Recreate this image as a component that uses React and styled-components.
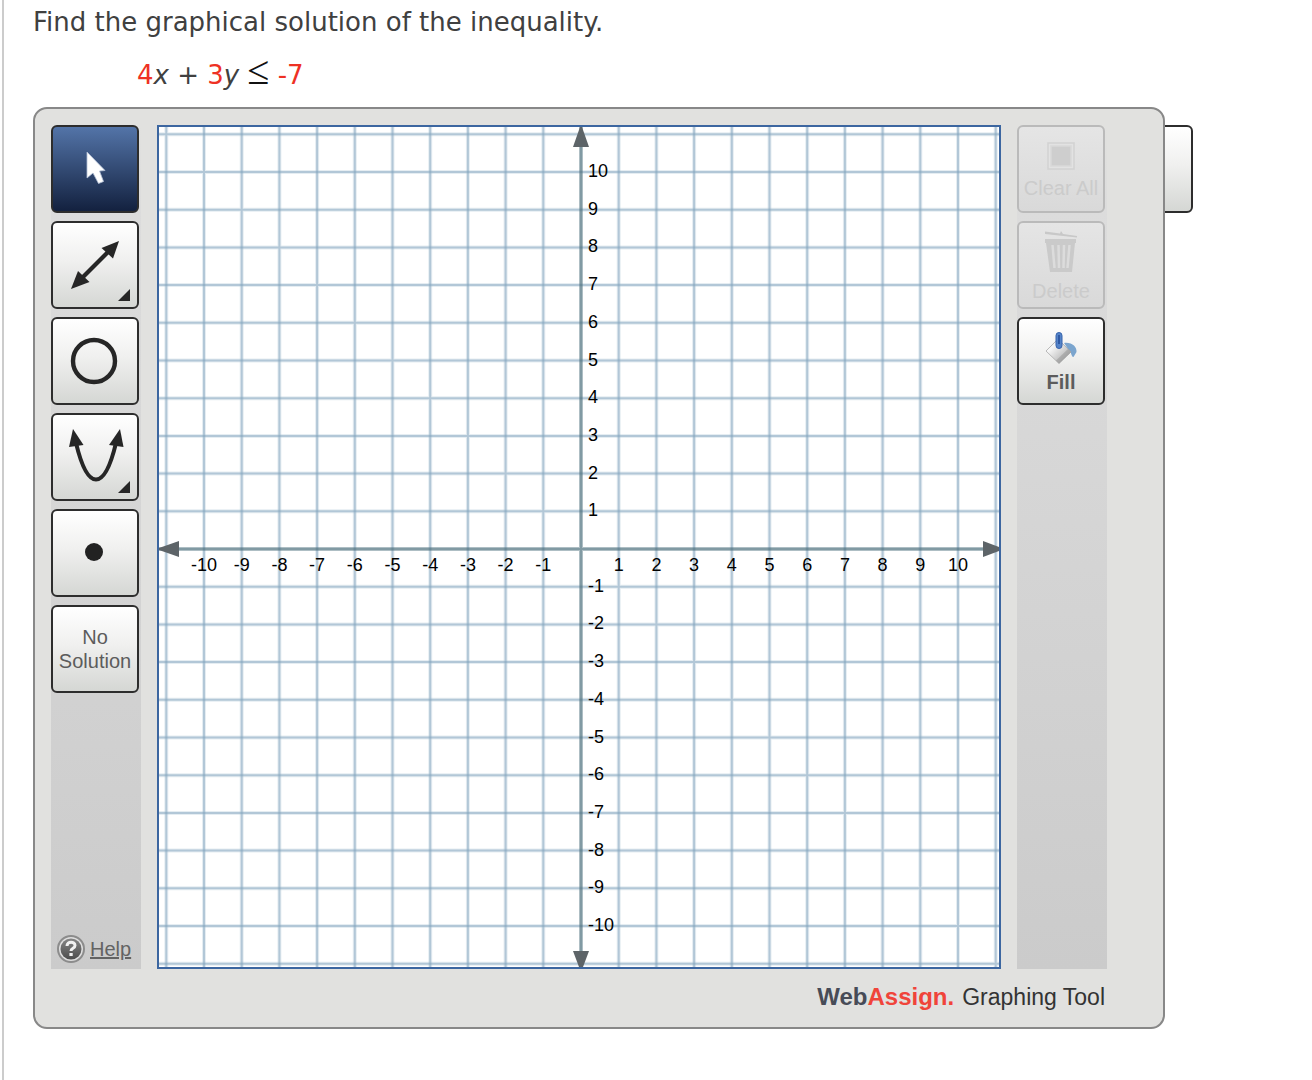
import React, { useState } from 'react'
import styled, { createGlobalStyle, css } from 'styled-components'

const STEP = 37.7
const SIZE = 840
const CENTER = 422

const lines = Array.from({ length: 23 }, (_, i) => i - 11).filter(n => n !== 0)
const labels = lines.filter(n => Math.abs(n) <= 10)

const PointerIcon = () => (
    <svg width="84" height="84" viewBox="0 0 84 84" aria-hidden="true">
        <path d="M34 25 L34 51 L40 46 L45.500 56.500 L50.500 54.500 L46.500 44 L52 43.500 Z" fill="#fff" stroke="#b4c0d6" strokeWidth="0.8" />
    </svg>
)

const LineIcon = () => (
    <svg width="84" height="84" viewBox="0 0 84 84" aria-hidden="true">
        <path d="M28 56 L57 27" stroke="#262626" strokeWidth="4.200" />
        <path d="M66 18 L60 35.500 L48.500 25 Z" fill="#262626" />
        <path d="M18 66 L25 48 L36.500 59 Z" fill="#262626" />
        <path d="M65 78 L77 66 L77 78 Z" fill="#262626" />
    </svg>
)

const CircleIcon = () => (
    <svg width="84" height="84" viewBox="0 0 84 84" aria-hidden="true">
        <circle cx="41" cy="42" r="21" fill="none" stroke="#262626" strokeWidth="4.400" />
    </svg>
)

const ParabolaIcon = () => (
    <svg width="84" height="84" viewBox="0 0 84 84" aria-hidden="true">
        <path d="M23 28 C29 53 36 64.500 43 64.500 C50 64.500 57 53 63 28" fill="none" stroke="#262626" strokeWidth="4" />
        <path d="M20 14 L30.500 30 L16 32 Z" fill="#262626" />
        <path d="M67 14 L70.500 32 L56 30 Z" fill="#262626" />
        <path d="M65 78 L77 66 L77 78 Z" fill="#262626" />
    </svg>
)

const PointIcon = () => (
    <svg width="84" height="84" viewBox="0 0 84 84" aria-hidden="true">
        <circle cx="41" cy="41" r="9" fill="#222" />
    </svg>
)

const ClearIcon = () => (
    <svg width="28" height="28" viewBox="0 0 28 28" aria-hidden="true">
        <rect x="1" y="1" width="26" height="26" fill="#e2e2e2" stroke="#d2d2d2" strokeWidth="1.500" />
        <rect x="4" y="4" width="20" height="20" fill="#cecece" stroke="#d9d9d9" strokeWidth="1.500" />
    </svg>
)

const TrashIcon = () => (
    <svg width="34" height="42" viewBox="0 0 34 42" aria-hidden="true">
        <path d="M1 0.500 L16 2.500 L17 0 L19 3 L33 5 L33 6.500 L1 3 Z" fill="#c8c8c8" />
        <path d="M1 8 H32 V12 H31 L28 41 H6 L2 12 H1 Z" fill="#cacaca" />
        <path d="M8.500 14 L10.500 37 M14.500 14 L15 37 M20 14 L19.500 37 M25.500 14 L23.500 37" stroke="#dcdcdc" strokeWidth="2.500" />
    </svg>
)

const FillIcon = () => (
    <svg width="32" height="32" viewBox="0 0 32 32" aria-hidden="true">
        <defs>
            <linearGradient id="bucket" x1="0" y1="0" x2="1" y2="1">
                <stop offset="0.3" stopColor="#f6f6f6" />
                <stop offset="1" stopColor="#999" />
            </linearGradient>
        </defs>
        <path d="M19 11 C27 10 32 15 31.500 20 L28.500 25 C26 25 27 20 23 17 Z" fill="#7ba5ce" />
        <path d="M1 19 L13 7 L26 20 L14 31.500 Z" fill="url(#bucket)" stroke="#aaa" strokeWidth="0.8" />
        <path d="M14 31.500 L26 20 L23 17 L11 28.500 Z" fill="#888" opacity="0.4" />
        <rect x="11" y="0.500" width="6" height="16" rx="3" fill="#5483c8" stroke="#3763ab" strokeWidth="1" />
        <path d="M14 3 V12" stroke="#2f59a3" strokeWidth="2" />
    </svg>
)

const HelpIcon = () => (
    <svg width="30" height="30" viewBox="0 0 30 30" aria-hidden="true">
        <defs>
            <linearGradient id="help" x1="0" y1="0" x2="0" y2="1">
                <stop offset="0" stopColor="#858585" />
                <stop offset="1" stopColor="#4c4c4c" />
            </linearGradient>
        </defs>
        <circle cx="15" cy="15" r="13" fill="#dedede" stroke="#8c8c8c" strokeWidth="2" />
        <circle cx="15" cy="15" r="10.500" fill="url(#help)" />
        <path d="M11 12 C11 7 19 7 19 11.500 C19 14.500 15 14 15 17" fill="none" stroke="#f0f0f0" strokeWidth="3" />
        <rect x="13.400" y="19" width="3.300" height="3" fill="#f0f0f0" />
    </svg>
)

const drawTools = [
    { id: 'pointer', label: 'Pointer', icon: <PointerIcon /> },
    { id: 'line', label: 'Line', icon: <LineIcon /> },
    { id: 'circle', label: 'Circle', icon: <CircleIcon /> },
    { id: 'parabola', label: 'Parabola', icon: <ParabolaIcon /> },
    { id: 'point', label: 'Point', icon: <PointIcon /> },
]

function Graph() {
    return (
        <GraphFrame>
            <Plot viewBox={`0 0 ${SIZE} ${SIZE}`} role="img" aria-label="Coordinate plane">
                {lines.map(n => {
                    const pos = CENTER + n * STEP
                    return (
                        <g key={n}>
                            <GridHalo d={`M${pos} 0 V${SIZE} M0 ${pos} H${SIZE}`} />
                            <GridLine d={`M${pos} 0 V${SIZE} M0 ${pos} H${SIZE}`} />
                        </g>
                    )
                })}
                <Axis $width={4} d={`M${CENTER} 0 V${SIZE} M0 ${CENTER} H${SIZE}`} />
                <Axis $width={2} d={`M${CENTER} 0 V${SIZE} M0 ${CENTER} H${SIZE}`} />
                <Arrow d="M421 0 H423 L430 20 H414 Z" />
                <Arrow d="M414 824 H430 L424 840 H420 Z" />
                <Arrow d="M0 421 L20 414 V430 L0 423 Z" />
                <Arrow d="M824 414 L840 420 V424 L824 430 Z" />
                {labels.map(n => (
                    <g key={n}>
                        <AxisLabel x={CENTER + n * STEP} y={CENTER + 22} textAnchor="middle">{n}</AxisLabel>
                        <AxisLabel x={CENTER + 7} y={CENTER - n * STEP + 5}>{n}</AxisLabel>
                    </g>
                ))}
            </Plot>
        </GraphFrame>
    )
}

function App() {
    const [tool, setTool] = useState('pointer')

    return (
        <>
            <GlobalStyle />
            <Page>
                <Question>Find the graphical solution of the inequality.</Question>
                <Equation>
                    <Num>4</Num><i>x</i> + <Num>3</Num><i>y</i> <Relation>≤</Relation> <Num>-7</Num>
                </Equation>
                <ToolRow>
                    <Panel>
                        <Workspace>
                            <Toolbar>
                                {drawTools.map(({ id, label, icon }) => (
                                    <ToolButton
                                        key={id}
                                        type="button"
                                        aria-label={label}
                                        $active={tool === id}
                                        onClick={() => setTool(id)}
                                    >
                                        {icon}
                                    </ToolButton>
                                ))}
                                <ToolButton type="button">
                                    <span>No<br />Solution</span>
                                </ToolButton>
                                <HelpLink href="#help">
                                    <HelpIcon />
                                    <span>Help</span>
                                </HelpLink>
                            </Toolbar>
                            <Graph />
                            <Toolbar>
                                <ToolButton type="button" $stacked disabled>
                                    <ClearIcon />
                                    Clear All
                                </ToolButton>
                                <ToolButton type="button" $stacked disabled>
                                    <TrashIcon />
                                    Delete
                                </ToolButton>
                                <ToolButton type="button" $stacked $strong>
                                    <FillIcon />
                                    Fill
                                </ToolButton>
                            </Toolbar>
                        </Workspace>
                        <Brand>
                            <BrandName>Web<em>Assign.</em></BrandName>
                            <span>Graphing Tool</span>
                        </Brand>
                    </Panel>
                    <SideTab type="button" aria-label="Options" />
                </ToolRow>
            </Page>
        </>
    )
}

export default App

const GlobalStyle = createGlobalStyle`
    * {
        box-sizing: border-box;
    }
    body {
        margin: 0;
        background: #fff;
    }
`
const Page = styled.main`
    min-height: 100vh;
    margin-left: 2px;
    padding: 6px 24px 24px 29px;
    border-left: 2px solid #ccc;
    color: #404040;
    font-family: Verdana, 'DejaVu Sans', sans-serif;
    font-size: 26px;
    line-height: 32px;
`
const Question = styled.p`
    margin: 0;
`
const Equation = styled.p`
    margin: 21px 0 16px;
    padding-left: 104px;
`
const Num = styled.span`
    color: #ee3124;
`
const Relation = styled.span`
    color: #111;
    font-family: 'Liberation Serif', serif;
    font-size: 40px;
    line-height: 1px;
`
const ToolRow = styled.div`
    display: flex;
    align-items: flex-start;
`
const Panel = styled.section`
    position: relative;
    z-index: 1;
    flex: 1;
    min-width: 0;
    max-width: 1132px;
    padding: 16px 56px 0 16px;
    background: #e1e1df;
    border: 2px solid #888;
    border-radius: 14px;
`
const Workspace = styled.div`
    display: flex;
    gap: 16px;
`
const Toolbar = styled.div`
    flex: none;
    display: flex;
    flex-direction: column;
    gap: 8px;
    width: 90px;
    background: linear-gradient(#e1e1df, #dcdcdc 10%, #cbcbcb);
`
const buttonFace = css`
    background: linear-gradient(#fff, #f0f0ef 45%, #d5d7d4);
    border: 2px solid #2d2d2d;
    border-radius: 6px;
`
const ToolButton = styled.button`
    ${buttonFace}
    display: flex;
    flex-direction: column;
    align-items: center;
    justify-content: center;
    gap: 6px;
    width: 88px;
    height: 88px;
    padding: ${({ $stacked }) => ($stacked ? '4px 0 0' : '0')};
    color: #5c5c5c;
    font-family: Arial, 'Liberation Sans', sans-serif;
    font-size: 20px;
    font-weight: ${({ $strong }) => ($strong ? 700 : 400)};
    line-height: 24px;
    white-space: nowrap;
    cursor: pointer;

    ${({ $active }) => $active && css`
        background: linear-gradient(#5374a8, #13213f);
    `}

    &:disabled {
        background: linear-gradient(#e5e5e5, #d9d9d9);
        border-color: #bababa;
        color: #cbcbcb;
        cursor: default;
    }
`
const HelpLink = styled.a`
    display: flex;
    align-items: center;
    gap: 4px;
    margin-top: auto;
    padding: 0 0 5px 5px;
    color: #636363;
    font-family: Arial, 'Liberation Sans', sans-serif;
    font-size: 20px;
    line-height: 24px;
    text-decoration: none;

    span {
        text-decoration: underline;
    }
`
const GraphFrame = styled.div`
    flex: 1;
    min-width: 0;
    background: #fff;
    border: 2px solid #3c66a0;
`
const Plot = styled.svg`
    display: block;
    width: 100%;
`
const GridHalo = styled.path`
    stroke: rgba(150, 185, 205, 0.25);
    stroke-width: 4;
`
const GridLine = styled.path`
    stroke: rgba(128, 162, 188, 0.5);
    stroke-width: 2;
`
const Axis = styled.path`
    stroke: rgba(75, 110, 125, 0.45);
    stroke-width: ${({ $width }) => $width};
`
const Arrow = styled.path`
    fill: #5d6468;
`
const AxisLabel = styled.text`
    fill: #000;
    font-family: Arial, 'Liberation Sans', sans-serif;
    font-size: 18px;
`
const Brand = styled.footer`
    display: flex;
    align-items: baseline;
    justify-content: flex-end;
    gap: 8px;
    padding: 14px 2px 16px 0;
    color: #333;
    font-family: Arial, 'Liberation Sans', sans-serif;
    font-size: 23px;
    line-height: 28px;
`
const BrandName = styled.strong`
    color: #474b57;
    font-size: 24px;

    em {
        color: #f0443a;
        font-style: normal;
    }
`
const SideTab = styled.button`
    ${buttonFace}
    flex: none;
    width: 88px;
    height: 88px;
    margin: 18px 0 0 -60px;
`
